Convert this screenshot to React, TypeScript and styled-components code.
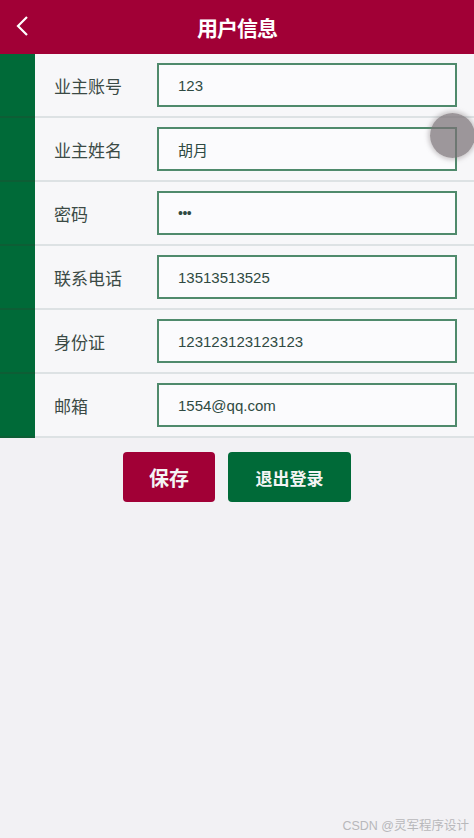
import React from "react";
import styled, { createGlobalStyle } from "styled-components";

// 用户信息字段
const fields = [
  { label: "业主账号", value: "123" },
  { label: "业主姓名", value: "胡月" },
  { label: "密码", value: "•••", password: true },
  { label: "联系电话", value: "13513513525" },
  { label: "身份证", value: "123123123123123" },
  { label: "邮箱", value: "1554@qq.com" },
];

const GlobalStyle = createGlobalStyle`
  html, body {
    margin: 0;
    padding: 0;
    background: #f2f1f4;
    font-family: "Liberation Sans", Arial, "Noto Sans CJK SC", sans-serif;
  }
  * { box-sizing: border-box; }
`;

const Page = styled.div`
  position: relative;
  width: 474px;
  height: 838px;
  background: #f2f1f4;
  overflow: hidden;
`;

const Header = styled.header`
  height: 54px;
  background: #a10036;
  display: flex;
  align-items: center;
  justify-content: center;
  position: relative;
`;

const BackButton = styled.button`
  position: absolute;
  left: 8px;
  top: 12px;
  width: 28px;
  height: 28px;
  padding: 0;
  border: none;
  background: none;
  display: flex;
  align-items: center;
  justify-content: center;
`;

const Title = styled.h1`
  margin: 0;
  color: #fff;
  font-size: 21px;
  font-weight: 700;
  letter-spacing: -1px;
`;

const Form = styled.div`
  display: flex;
  flex-direction: column;
`;

const Row = styled.div`
  display: flex;
  height: 64px;
`;

const SideBar = styled.div`
  width: 35px;
  background: #006a38;
  border-bottom: 2px solid #0d5e35;
`;

const Cell = styled.div`
  flex: 1;
  display: flex;
  align-items: center;
  background: #f7f7f9;
  border-bottom: 2px solid #dde2e4;
  padding-left: 19px;
`;

const Label = styled.span`
  width: 103px;
  font-size: 17px;
  color: #3b4a45;
`;

const Field = styled.div<{ $password?: boolean }>`
  width: 300px;
  height: 44px;
  border: 2px solid #4f8a6c;
  background: #fbfbfd;
  display: flex;
  align-items: center;
  padding-left: 19px;
  font-size: ${(p) => (p.$password ? "14px" : "15px")};
  letter-spacing: ${(p) => (p.$password ? "-0.5px" : "0")};
  color: #2f4a42;
`;

const Actions = styled.div`
  display: flex;
  justify-content: center;
  gap: 13px;
  margin-top: 14px;
`;

const Button = styled.button<{ $tone: "red" | "green"; $w: number }>`
  width: ${(p) => p.$w}px;
  height: 50px;
  border: none;
  border-radius: 4px;
  background: ${(p) => (p.$tone === "red" ? "#a10036" : "#006a38")};
  color: #f4f4f4;
  font-family: inherit;
  font-weight: 700;
  font-size: ${(p) => (p.$tone === "red" ? "20px" : "17px")};
  padding: 0;
`;

// 录屏时的触摸点
const TouchDot = styled.div`
  position: absolute;
  left: 430px;
  top: 113px;
  width: 45px;
  height: 45px;
  border-radius: 50%;
  background: rgba(120, 112, 116, 0.72);
  box-shadow: 0 0 4px 2px rgba(120, 112, 116, 0.35);
`;

const Watermark = styled.div`
  position: absolute;
  right: 5px;
  bottom: 4px;
  font-size: 12.5px;
  color: #b8b8bb;
`;

const App = () => {
  return (
    <Page>
      <GlobalStyle />
      <Header>
        <BackButton aria-label="返回">
          <svg width="16" height="22" viewBox="0 0 16 22">
            <path d="M13 2 L4 11 L13 20" fill="none" stroke="#fff" strokeWidth="2.2" />
          </svg>
        </BackButton>
        <Title>用户信息</Title>
      </Header>
      <Form>
        {fields.map((f) => (
          <Row key={f.label}>
            <SideBar />
            <Cell>
              <Label>{f.label}</Label>
              <Field $password={f.password}>{f.value}</Field>
            </Cell>
          </Row>
        ))}
      </Form>
      <Actions>
        <Button $tone="red" $w={92}>保存</Button>
        <Button $tone="green" $w={123}>退出登录</Button>
      </Actions>
      <TouchDot />
      <Watermark>CSDN @灵军程序设计</Watermark>
    </Page>
  );
};

export default App;
